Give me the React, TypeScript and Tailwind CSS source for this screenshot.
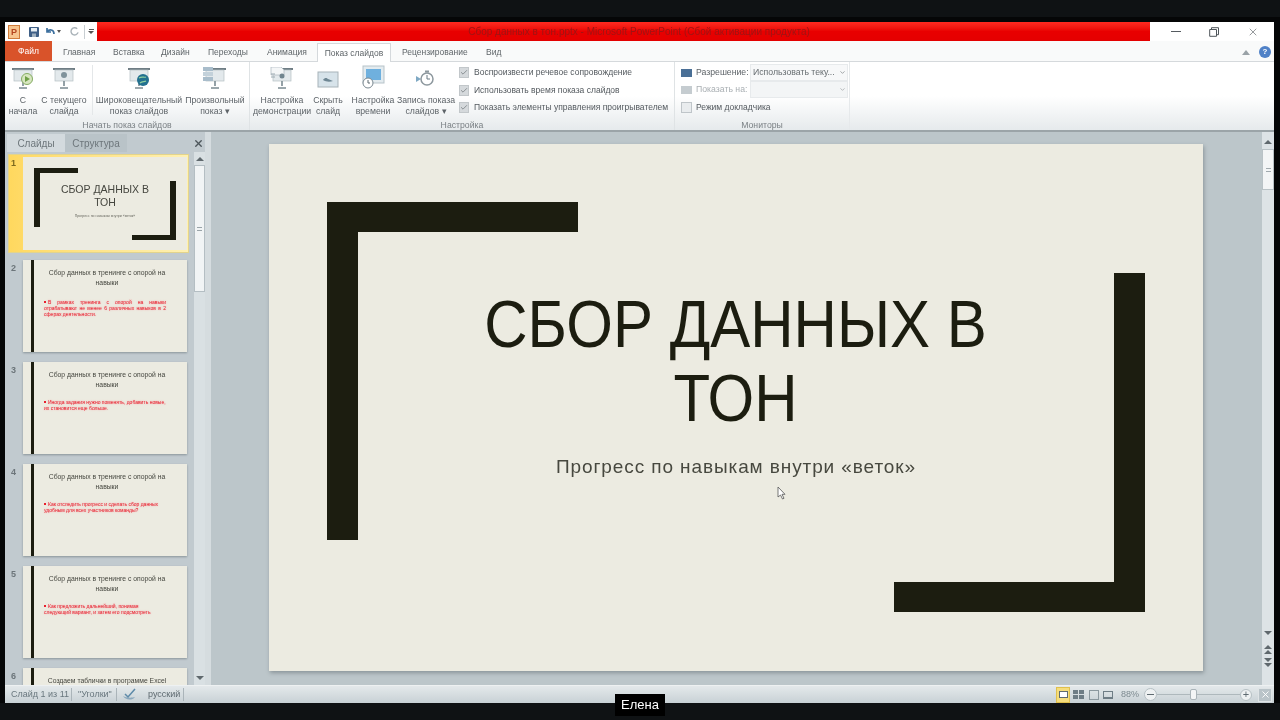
import { Check, X, ChevronDown } from "lucide-react";

const ui = "font-['Liberation_Sans','Noto_Sans',sans-serif]";

// projector screen used by most of the ribbon buttons
function Screen({ badge }: { badge?: "play" | "dot" | "globe" | "list" | "doc" }) {
  return (
    <svg width="24" height="22" viewBox="0 0 24 22">
      <rect x="1" y="1" width="22" height="2" fill="#6f7d84" />
      <rect x="3" y="3" width="18" height="11" fill="#e3e9ec" stroke="#b4bfc4" strokeWidth="0.7" />
      <path d="M12 14v5M8 21h8" stroke="#7b8a91" strokeWidth="1.6" fill="none" />
      {badge === "play" && (
        <>
          <circle cx="16" cy="12" r="5.5" fill="#d7e6c0" stroke="#86ad63" />
          <path d="M14 9l5 3-5 3z" fill="#6f9f47" />
        </>
      )}
      {badge === "dot" && <circle cx="12" cy="8" r="3" fill="#7f929b" />}
      {badge === "globe" && (
        <>
          <circle cx="16" cy="13" r="6" fill="#22708f" />
          <path d="M12 11c3-2 5 0 7-1M13 16c2-2 4-1 6-2" stroke="#8fd0a0" strokeWidth="1.2" fill="none" />
        </>
      )}
      {badge === "list" && (
        <>
          <rect x="0" y="0" width="10" height="4" fill="#a9bdcb" />
          <rect x="0" y="5" width="10" height="4" fill="#c3d1da" />
          <rect x="0" y="10" width="10" height="4" fill="#a9bdcb" />
        </>
      )}
      {badge === "doc" && (
        <>
          <path d="M1 0h10l3 3v5H1z" fill="#f4f6f7" stroke="#aab6bc" strokeWidth="0.7" />
          <circle cx="12" cy="9" r="2.5" fill="#71858f" />
          <path d="M1 7h4M1 10h4" stroke="#9aa8af" />
        </>
      )}
    </svg>
  );
}

function RibbonButton({ w, lines, icon }: { w: string; lines: string[]; icon: React.ReactNode }) {
  return (
    <div className={`${w} flex flex-col items-center shrink-0`}>
      <div className="h-[27px] flex items-end justify-center">{icon}</div>
      <div className="mt-[6px] text-center text-[8.7px] leading-[11px] text-[#5d6368] whitespace-nowrap">
        {lines.map((l) => (
          <div key={l}>{l}</div>
        ))}
      </div>
    </div>
  );
}

function CheckRow({ label }: { label: string }) {
  return (
    <div className="flex items-center gap-[5px] h-[17.5px]">
      <div className="w-[10px] h-[11px] bg-[#d5d9dc] border border-[#c2c7ca] flex items-center justify-center">
        <Check size={9} strokeWidth={2.5} className="text-[#7c8286]" />
      </div>
      <span className="text-[8.5px] text-[#53595e] whitespace-nowrap">{label}</span>
    </div>
  );
}

function Thumb({ n, title, body, bodyTop, justify }: { n: number; title: string; body: string; bodyTop?: string; justify?: boolean }) {
  return (
    <div className="flex h-[102px] shrink-0">
      <div className="w-[15px] pl-[3px] pt-[2px] text-[9px] font-bold text-[#6c757a]">{n}</div>
      <div className="relative w-[164px] h-[92px] bg-[#ecebe1] shadow-[0_1px_2px_#8a9499] overflow-hidden">
        <div className="absolute left-[8px] top-0 bottom-0 w-[3px] bg-[#1c1d10]" />
        <div className="ml-[14px] w-[140px] pt-[8px] text-center text-[6.8px] leading-[10px] text-[#45463f]">
          <span className="inline-block w-[124px]">{title}</span>
        </div>
        {body && (
          <div
            className={`absolute left-[21px] w-[122px] ${bodyTop} text-[5px] leading-[6px] text-[#e8202e] [text-shadow:0_0_2px_#f59aa0] ${
              justify ? "text-justify" : ""
            }`}
          >
            <span className="inline-block w-[2px] h-[2px] mr-[2px] mb-[1px] bg-[#e8202e]" />
            {body}
          </div>
        )}
      </div>
    </div>
  );
}

function Arrow({ down }: { down?: boolean }) {
  return <div className={`w-0 h-0 border-x-[4px] border-x-transparent ${down ? "border-t-[4px] border-t-[#5f686d]" : "border-b-[4px] border-b-[#5f686d]"}`} />;
}

export default function App() {
  const tabs: [string, string][] = [
    ["Главная", "w-[50px]"],
    ["Вставка", "w-[48px]"],
    ["Дизайн", "w-[47px]"],
    ["Переходы", "w-[59px]"],
    ["Анимация", "w-[50px]"],
  ];

  return (
    <div className={`relative w-[1280px] h-[720px] overflow-hidden bg-[#0f1214] pt-[17px] ${ui} blur-[0.6px]`}>
      <div className="h-[686px] bg-[#050607] pt-[5px] pl-[5px] pr-[6px]">
      <div className="w-full h-[681px] flex flex-col bg-[#f4f6f7]">
        {/* title bar */}
        <div className="h-[19px] flex items-center shrink-0 bg-white">
          <div className="w-[92px] h-full flex items-center shrink-0">
            <div className="ml-[3px] w-[12px] h-[14px] bg-[#f7c58f] border border-[#d07c3a] text-[9px] leading-[12px] font-bold text-[#b5451f] text-center">P</div>
            <svg className="ml-[9px]" width="10" height="10" viewBox="0 0 10 10">
              <rect width="10" height="10" rx="1" fill="#3f5f86" />
              <rect x="2" y="1" width="6" height="3.5" fill="#e6edf2" />
              <rect x="3" y="6.5" width="4" height="3.5" fill="#9fb0bf" />
            </svg>
            <svg className="ml-[6px]" width="10" height="10" viewBox="0 0 10 10">
              <path d="M2 1v4h4M2 5c2-3 7-3 7 2" stroke="#3c6f9e" strokeWidth="1.7" fill="none" />
            </svg>
            <div className="ml-[2px] w-0 h-0 border-x-[2px] border-x-transparent border-t-[3px] border-t-[#555]" />
            <svg className="ml-[9px]" width="9" height="9" viewBox="0 0 10 10">
              <path d="M8 2a4 4 0 1 0 1 4" stroke="#a9b2b8" strokeWidth="1.5" fill="none" />
            </svg>
            <div className="ml-[5px] w-px h-[14px] bg-[#c8ced2]" />
            <div className="ml-[3px] flex flex-col items-center gap-px">
              <div className="w-[5px] h-px bg-[#555]" />
              <div className="w-0 h-0 border-x-[3px] border-x-transparent border-t-[3px] border-t-[#555]" />
            </div>
          </div>
          <div className="w-[1053px] h-full bg-gradient-to-b from-[#ff2a20] via-[#e80000] to-[#e40000] shrink-0 flex items-center justify-center">
            <span className="text-[10px] text-[#9c1414] ml-[31px] whitespace-nowrap">
              Сбор данных в тон.pptx - Microsoft PowerPoint (Сбой активации продукта)
            </span>
          </div>
          <div className="flex-1 flex items-center pl-[21px] gap-[28px] text-[#666c70]">
            <div className="w-[10px] h-px bg-[#555b60]" />
            <svg width="10" height="10" viewBox="0 0 10 10">
              <path d="M2.5 2V.7h7v7H8M.7 2.5h6.8v6.8H.7z" stroke="#4f565b" fill="none" />
            </svg>
            <X size={12} strokeWidth={1.2} className="text-[#4f565b]" />
          </div>
        </div>

        {/* tabs */}
        <div className="h-[21px] flex items-end shrink-0 bg-[#f9fafa] border-b border-[#d5d9dc] relative text-[8.5px] text-[#5f6569]">
          <div className="w-[47px] h-[20px] bg-[#d9532a] text-white flex items-center justify-center">Файл</div>
          <div className="w-[11px] shrink-0" />
          {tabs.map(([t, m]) => (
            <div key={t} className={`${m} h-[18px] flex items-center whitespace-nowrap`}>
              {t}
            </div>
          ))}
          <div className="w-[74px] h-[19px] -mb-px bg-white border border-b-0 border-[#d5d9dc] flex items-center justify-center">
            Показ слайдов
          </div>
          <div className="ml-[11px] w-[84px] h-[18px] flex items-center">Рецензирование</div>
          <div className="h-[18px] flex items-center">Вид</div>
          <div className="ml-auto mr-[3px] h-[18px] flex items-center gap-[9px]">
            <div className="w-0 h-0 border-x-[4px] border-x-transparent border-b-[5px] border-b-[#9aa2a7]" />
            <div className="w-[12px] h-[12px] rounded-full bg-[#4f81c7] text-white text-[8px] leading-[12px] text-center font-bold">?</div>
          </div>
        </div>

        {/* ribbon */}
        <div className="h-[70px] flex shrink-0 bg-gradient-to-b from-white from-50% to-[#e6eaec] border-b-2 border-[#9ba4a8]">
          <div className="w-[245px] shrink-0 flex flex-col border-r border-[#dfe3e5]">
            <div className="flex-1 flex">
              <RibbonButton w="w-[36px]" lines={["С", "начала"]} icon={<Screen badge="play" />} />
              <RibbonButton w="w-[46px]" lines={["С текущего", "слайда"]} icon={<Screen badge="dot" />} />
              <div className="w-px h-[50px] mt-[3px] ml-[5px] bg-[#e4e7e9]" />
              <RibbonButton w="w-[92px]" lines={["Широковещательный", "показ слайдов"]} icon={<Screen badge="globe" />} />
              <RibbonButton w="w-[60px]" lines={["Произвольный", "показ ▾"]} icon={<Screen badge="list" />} />
            </div>
            <div className="h-[10px] text-center text-[8.7px] leading-[10px] text-[#7b8185]">Начать показ слайдов</div>
          </div>
          <div className="w-[425px] shrink-0 flex flex-col border-r border-[#dfe3e5]">
            <div className="flex-1 flex pl-[4px]">
              <RibbonButton w="w-[56px]" lines={["Настройка", "демонстрации"]} icon={<Screen badge="doc" />} />
              <RibbonButton
                w="w-[36px]"
                lines={["Скрыть", "слайд"]}
                icon={
                  <svg width="22" height="18" viewBox="0 0 22 18">
                    <rect x="1" y="1" width="20" height="15" fill="#d7e3ea" stroke="#a8b3b9" />
                    <path d="M6 9c2-3 4-2 5-1 2 1 3 1 5 2-3 1-7 1-10-1z" fill="#6f8794" />
                  </svg>
                }
              />
              <RibbonButton
                w="w-[54px]"
                lines={["Настройка", "времени"]}
                icon={
                  <svg width="24" height="24" viewBox="0 0 24 24">
                    <rect x="2" y="1" width="21" height="17" fill="#e3ebef" stroke="#b7c3c9" />
                    <rect x="5" y="4" width="15" height="11" fill="#6fb0de" />
                    <circle cx="7" cy="18" r="5" fill="#fff" stroke="#7a8890" />
                    <path d="M7 15v3h2" stroke="#5e6a70" fill="none" />
                  </svg>
                }
              />
              <RibbonButton
                w="w-[52px]"
                lines={["Запись показа", "слайдов ▾"]}
                icon={
                  <svg width="20" height="20" viewBox="0 0 20 20">
                    <path d="M0 7l5 3-5 3z" fill="#7fa9c4" />
                    <circle cx="11" cy="10" r="6" fill="#fff" stroke="#8d989e" strokeWidth="1.5" />
                    <rect x="9" y="1.5" width="4" height="2" fill="#8d989e" />
                    <path d="M11 6v4h3" stroke="#6a7a84" fill="none" />
                  </svg>
                }
              />
              <div className="ml-[7px] pt-[2px]">
                <CheckRow label="Воспроизвести речевое сопровождение" />
                <CheckRow label="Использовать время показа слайдов" />
                <CheckRow label="Показать элементы управления проигрывателем" />
              </div>
            </div>
            <div className="h-[10px] text-center text-[8.7px] leading-[10px] text-[#7b8185]">Настройка</div>
          </div>
          <div className="w-[175px] shrink-0 flex flex-col border-r border-[#e6e9eb]">
            <div className="flex-1 pl-[6px] pt-[2px]">
              <div className="flex items-center h-[17px]">
                <div className="w-[11px] h-[8px] bg-[#4a6f96]" />
                <span className="ml-[4px] w-[54px] text-[8.7px] text-[#5d6368] whitespace-nowrap">Разрешение:</span>
                <div className="w-[98px] h-[17px] bg-[#f7f8f9] border border-[#e7eaec] pl-[2px] flex items-center text-[8.7px] text-[#666c70] whitespace-nowrap">
                  Использовать теку...
                  <ChevronDown size={7} className="ml-auto mr-[1px]" />
                </div>
              </div>
              <div className="flex items-center h-[17px]">
                <div className="w-[11px] h-[8px] bg-[#c5ccd0]" />
                <span className="ml-[4px] w-[54px] text-[8.7px] text-[#a9afb3] whitespace-nowrap">Показать на:</span>
                <div className="w-[98px] h-[17px] bg-[#f3f5f6] border border-[#e7eaec] flex items-center">
                  <ChevronDown size={7} className="ml-auto mr-[1px] text-[#8b9195]" />
                </div>
              </div>
              <div className="flex items-center h-[19px]">
                <div className="w-[11px] h-[11px] bg-[#e9ecee] border border-[#bfc5c9]" />
                <span className="ml-[4px] text-[8.5px] text-[#53595e]">Режим докладчика</span>
              </div>
            </div>
            <div className="h-[10px] text-center text-[8.7px] leading-[10px] text-[#7b8185]">Мониторы</div>
          </div>
        </div>

        {/* workspace */}
        <div className="h-[553px] flex shrink-0 bg-[#bcc6ca]">
          {/* slide panel */}
          <div className="w-[200px] shrink-0 flex flex-col bg-[#c1cacf] overflow-hidden">
            <div className="h-[20px] pt-[2px] flex items-stretch shrink-0 text-[10px] text-[#6d767b]">
              <div className="ml-[2px] w-[58px] bg-[#d3dade] flex items-center justify-center">Слайды</div>
              <div className="w-[62px] bg-[#b9c3c8] flex items-center justify-center">Структура</div>
              <X size={11} strokeWidth={3} className="ml-auto mr-[1px] self-center text-[#4d565b]" />
            </div>
            <div className="flex-1 flex min-h-0">
              <div className="flex-1 min-w-0 overflow-hidden pl-[3px] pt-[2px]">
                <div className="flex w-[181px] h-[99px] mb-[7px] bg-gradient-to-r from-[#ffd85e] to-[#fff1b2] border border-[#e3d48c]">
                  <div className="w-[14px] pl-[2px] pt-[2px] text-[9px] font-bold text-[#7d6a1e]">1</div>
                  <div className="relative mt-[2px] w-[164px] h-[93px] bg-[#ecebe1] overflow-hidden">
                    <div className="absolute left-[11px] top-[11px] w-[44px] h-[5px] bg-[#1c1d10]" />
                    <div className="absolute left-[11px] top-[11px] w-[6px] h-[59px] bg-[#1c1d10]" />
                    <div className="absolute right-[11px] top-[24px] w-[6px] h-[59px] bg-[#1c1d10]" />
                    <div className="absolute right-[11px] top-[78px] w-[44px] h-[5px] bg-[#1c1d10]" />
                    <div className="pt-[26px] text-center text-[10.5px] leading-[13px] text-[#45463f]">
                      СБОР ДАННЫХ В<br />ТОН
                    </div>
                    <div className="mt-[5px] text-center text-[3.5px] leading-[5px] text-[#67675f]">Прогресс по навыкам внутри «веток»</div>
                  </div>
                </div>
                <Thumb n={2} justify bodyTop="top-[39px]" title="Сбор данных в тренинге с опорой на навыки" body="В рамках тренинга с опорой на навыки отрабатывают не менее 6 различных навыков в 2 сферах деятельности." />
                <Thumb n={3} bodyTop="top-[37px]" title="Сбор данных в тренинге с опорой на навыки" body="Иногда задания нужно поменять, добавить новые, их становится еще больше." />
                <Thumb n={4} bodyTop="top-[37px]" title="Сбор данных в тренинге с опорой на навыки" body="Как отследить прогресс и сделать сбор данных удобным для всех участников команды?" />
                <Thumb n={5} bodyTop="top-[37px]" title="Сбор данных в тренинге с опорой на навыки" body="Как предложить дальнейший, понимая следующий вариант, и затем его подсмотреть" />
                <Thumb n={6} title="Создаем таблички в программе Excel" body="" />
              </div>
              <div className="w-[11px] shrink-0 bg-[#d9e0e3] flex flex-col items-center pt-[5px] pb-[5px]">
                <Arrow />
                <div className="mt-[4px] w-full h-[127px] bg-[#f1f4f5] border border-[#b4bec3] flex items-center justify-center">
                  <div className="w-[5px] h-[4px] border-y border-[#9aa4a9]" />
                </div>
                <div className="mt-auto">
                  <Arrow down />
                </div>
              </div>
            </div>
          </div>
          <div className="w-[6px] shrink-0 bg-[#d5dcdf]" />

          {/* slide canvas */}
          <div className="flex-1 pl-[58px] pt-[12px]">
            <div className="relative w-[934px] h-[527px] bg-[#ecebe1] shadow-[1px_2px_4px_#8a9499]">
              <div className="absolute left-[58px] top-[58px] w-[251px] h-[30px] bg-[#1c1d10]" />
              <div className="absolute left-[58px] top-[58px] w-[31px] h-[338px] bg-[#1c1d10]" />
              <div className="absolute left-[845px] top-[129px] w-[31px] h-[339px] bg-[#1c1d10]" />
              <div className="absolute left-[625px] top-[438px] w-[251px] h-[30px] bg-[#1c1d10]" />
              <div className="pt-[150px]">
                <div className="ml-[-1px] scale-y-[1.1] text-center text-[60px] leading-[68px] text-[#1c1d10]">
                  СБОР ДАННЫХ В<br />ТОН
                </div>
              </div>
              <div className="mt-[24px] text-center text-[19px] leading-[26px] tracking-[0.9px] text-[#47483f]">
                Прогресс по навыкам внутри «веток»
              </div>
              <svg className="absolute left-[508px] top-[342px]" width="10" height="14" viewBox="0 0 10 14">
                <path d="M1 1v10l2.5-2 2 4 1.5-.7-2-4h3z" fill="#fff" stroke="#555" strokeWidth="0.8" />
              </svg>
            </div>
          </div>

          {/* main scrollbar */}
          <div className="w-[12px] shrink-0 bg-[#dde3e6] flex flex-col items-center pt-[8px]">
            <Arrow />
            <div className="mt-[5px] w-full h-[41px] bg-[#f3f5f6] border border-[#b9c2c6] flex items-center justify-center">
              <div className="w-[5px] h-[4px] border-y border-[#a0a9ae]" />
            </div>
            <div className="mt-[441px]">
              <Arrow down />
            </div>
            <div className="mt-[10px] flex flex-col items-center gap-px">
              <Arrow />
              <Arrow />
            </div>
            <div className="mt-[4px] flex flex-col items-center gap-px">
              <Arrow down />
              <Arrow down />
            </div>
          </div>
        </div>

        {/* status bar */}
        <div className="flex-1 flex items-center bg-gradient-to-b from-[#e4e9eb] to-[#c8d1d5] border-t border-[#eef1f2] text-[9px] text-[#69777e]">
          <span className="ml-[6px] w-[60px] whitespace-nowrap">Слайд 1 из 11</span>
          <div className="w-px h-[13px] bg-[#aab4b9]" />
          <span className="ml-[6px] w-[38px] whitespace-nowrap">"Уголки"</span>
          <div className="w-px h-[13px] bg-[#aab4b9]" />
          <svg className="ml-[5px]" width="15" height="13" viewBox="0 0 15 13">
            <path d="M1 8c2 4 9 5 12 1-3 1-9 1-12-1z" fill="#8ca9bd" />
            <path d="M3 6l3 3 7-8" stroke="#5d8aa8" strokeWidth="1.5" fill="none" />
          </svg>
          <span className="ml-[11px] w-[35px] text-[#5e6a70]">русский</span>
          <div className="w-px h-[13px] bg-[#aab4b9]" />
          <div className="ml-auto mr-[2px] flex items-center">
            <div className="w-[14px] h-[16px] bg-[#f5dd7c] border border-[#e0c04d] flex items-center justify-center">
              <div className="w-[9px] h-[7px] bg-white border border-[#5e6a70]" />
            </div>
            <div className="ml-[3px] w-[11px] h-[9px] grid grid-cols-2 gap-px">
              <div className="bg-[#6e7d85]" /><div className="bg-[#6e7d85]" /><div className="bg-[#6e7d85]" /><div className="bg-[#6e7d85]" />
            </div>
            <div className="ml-[5px] w-[10px] h-[10px] border border-[#8b989e]" />
            <div className="ml-[4px] w-[10px] h-[8px] border border-[#6e7d85] border-b-2" />
            <span className="ml-[8px] w-[23px] text-[#7d8a90]">88%</span>
            <div className="w-[13px] h-[13px] rounded-full bg-[#eef1f2] border border-[#b6c0c4] flex items-center justify-center">
              <div className="w-[7px] h-px bg-[#5f6b71]" />
            </div>
            <div className="relative w-[83px] h-px bg-[#aeb8bc]">
              <div className="absolute left-[33px] -top-[5px] w-[7px] h-[11px] rounded-[2px] bg-[#f3f5f6] border border-[#a9b3b8]" />
            </div>
            <div className="w-[12px] h-[12px] rounded-full bg-[#eef1f2] border border-[#b6c0c4] flex items-center justify-center text-[11px] leading-none text-[#5f6b71]">+</div>
            <div className="ml-[6px] w-[14px] h-[14px] bg-[#b9c3c8] border border-[#dfe4e6] flex items-center justify-center">
              <X size={11} className="text-white" />
            </div>
          </div>
        </div>
      </div>
      </div>

      {/* speaker caption */}
      <div className="absolute left-[615px] top-[694px] w-[50px] h-[22px] bg-black text-white text-[13px] leading-[22px] text-center">
        Елена
      </div>
    </div>
  );
}
